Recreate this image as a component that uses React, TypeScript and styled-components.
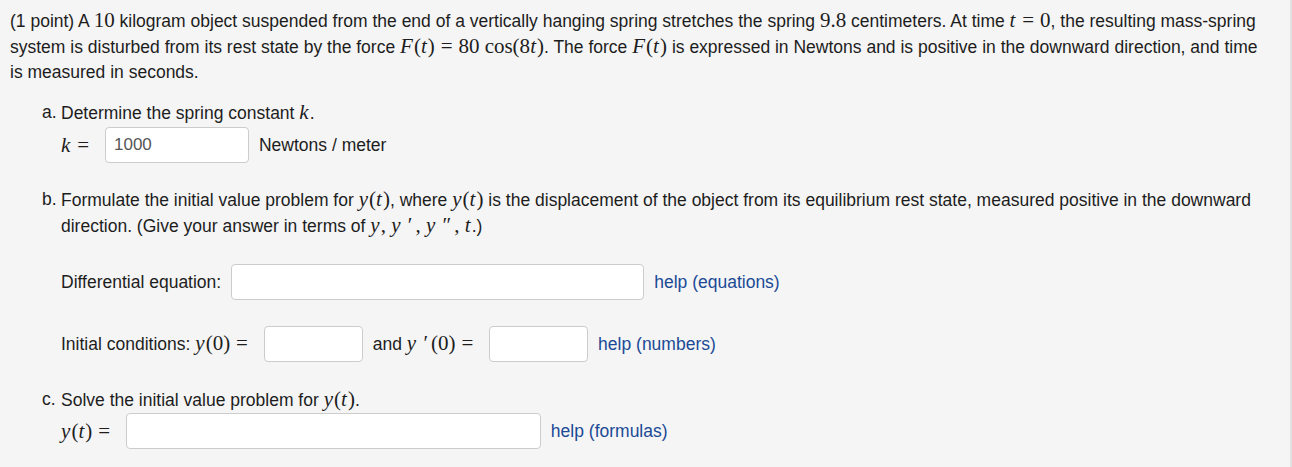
import { FC, ReactNode } from 'react'
import styled, { createGlobalStyle } from 'styled-components'

const GlobalStyle = createGlobalStyle`
  html, body {
    margin: 0;
    padding: 0;
    background: #f5f5f5;
  }
  body {
    font-family: "Liberation Sans", Arial, sans-serif;
    font-size: 17.5px;
    color: #1d1d1d;
  }
`

const Problem = styled.div`
  box-sizing: border-box;
  width: 1292px;
  min-height: 467px;
  padding: 8px 16px 0 10px;
  border-right: 2px solid #e2e2e2;
  line-height: 25px;
`

const Intro = styled.p`
  margin: 0;
`

const Part = styled.div<{ $top: number }>`
  display: grid;
  grid-template-columns: 19px 1fr;
  margin-top: ${({ $top }) => $top}px;
  padding-left: 32px;
`

const PartLabel = styled.span`
  grid-column: 1;
`

const PartBody = styled.div`
  grid-column: 2;
`

const Row = styled.div<{ $top?: number }>`
  display: flex;
  align-items: center;
  gap: 10px;
  height: 36px;
  margin-top: ${({ $top = 0 }) => $top}px;
`

const AnswerBox = styled.input<{ $w: number }>`
  box-sizing: border-box;
  width: ${({ $w }) => $w}px;
  height: 36px;
  padding: 0 8px;
  border: 1px solid #cccccc;
  border-radius: 4px;
  background: #ffffff;
  font-family: "Liberation Sans", Arial, sans-serif;
  font-size: 17px;
  color: #555555;
  outline: none;
`

const Help = styled.a`
  color: #1b4a95;
  text-decoration: none;
  cursor: pointer;
`

const MathText = styled.span`
  font-family: "Liberation Serif", "Times New Roman", serif;
  font-size: 1.2em;
  white-space: nowrap;
`

const V = styled.i`
  font-style: italic;
  padding-right: 0.05em;
`

const Prime = styled.span`
  margin: 0 0.14em 0 0.3em;
`

const Op = styled.span`
  margin: 0 0.28em;
`

const M: FC<{ children: ReactNode }> = ({ children }) => <MathText>{children}</MathText>

const Eq = () => <Op>=</Op>

const App: FC = () => {
  return (
    <>
      <GlobalStyle />
      <Problem>
        <Intro>
          (1 point) A <M>10</M> kilogram object suspended from the end of a vertically hanging spring
          stretches the spring <M>9.8</M> centimeters. At time{' '}
          <M>
            <V>t</V>
            <Eq />0
          </M>
          , the resulting mass-spring system is disturbed from its rest state by the force{' '}
          <M>
            <V>F</V>(<V>t</V>)<Eq />
            80 cos(8<V>t</V>)
          </M>
          . The force{' '}
          <M>
            <V>F</V>(<V>t</V>)
          </M>{' '}
          is expressed in Newtons and is positive in the downward direction, and time is measured in
          seconds.
        </Intro>

        <Part $top={15}>
          <PartLabel>a.</PartLabel>
          <PartBody>
            Determine the spring constant{' '}
            <M>
              <V>k</V>
            </M>
            .
            <Row $top={1}>
              <M>
                <V>k</V>
                <Eq />
              </M>
              <AnswerBox $w={144} defaultValue="1000" />
              <span>Newtons / meter</span>
            </Row>
          </PartBody>
        </Part>

        <Part $top={24}>
          <PartLabel>b.</PartLabel>
          <PartBody>
            Formulate the initial value problem for{' '}
            <M>
              <V>y</V>(<V>t</V>)
            </M>
            , where{' '}
            <M>
              <V>y</V>(<V>t</V>)
            </M>{' '}
            is the displacement of the object from its equilibrium rest state, measured positive in
            the downward direction. (Give your answer in terms of{' '}
            <M>
              <V>y</V>, <V>y</V>
              <Prime>′</Prime>, <V>y</V>
              <Prime>″</Prime>, <V>t</V>
            </M>
            .)
          </PartBody>
        </Part>

        <Part $top={0}>
          <PartBody>
            <Row $top={25}>
              <span>Differential equation:</span>
              <AnswerBox $w={413} />
              <Help>help (equations)</Help>
            </Row>
            <Row $top={26}>
              <span>
                Initial conditions:{' '}
                <M>
                  <V>y</V>(0)
                  <Eq />
                </M>
              </span>
              <AnswerBox $w={99} />
              <span>
                and{' '}
                <M>
                  <V>y</V>
                  <Prime>′</Prime>(0)
                  <Eq />
                </M>
              </span>
              <AnswerBox $w={99} />
              <Help>help (numbers)</Help>
            </Row>
          </PartBody>
        </Part>

        <Part $top={25}>
          <PartLabel>c.</PartLabel>
          <PartBody>
            Solve the initial value problem for{' '}
            <M>
              <V>y</V>(<V>t</V>)
            </M>
            .
            <Row>
              <M>
                <V>y</V>(<V>t</V>)
                <Eq />
              </M>
              <AnswerBox $w={415} />
              <Help>help (formulas)</Help>
            </Row>
          </PartBody>
        </Part>
      </Problem>
    </>
  )
}

export default App
